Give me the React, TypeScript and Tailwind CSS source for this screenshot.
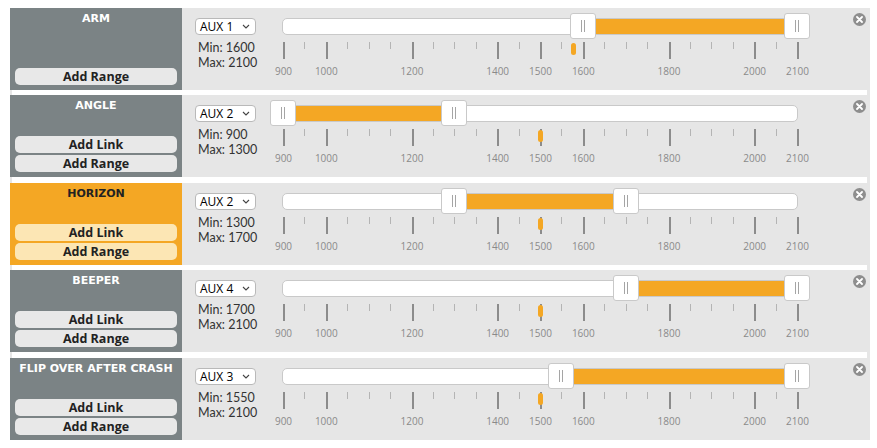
import React from "react";

const ORANGE = "#f4a724";
const W = 514;
const pos = (v: number) => 13 + ((v - 900) * W) / 1200;

const majors = [900, 1000, 1200, 1400, 1500, 1600, 1800, 2000, 2100];
const minors: number[] = [];
for (let v = 950; v <= 2050; v += 50) if (!majors.includes(v)) minors.push(v);

type Mode = {
  name: string;
  aux: string;
  lo: number;
  hi: number;
  marker: number;
  buttons: string[];
  active?: boolean;
};

const modes: Mode[] = [
  { name: "ARM", aux: "AUX 1", lo: 1600, hi: 2100, marker: 1576, buttons: ["Add Range"] },
  { name: "ANGLE", aux: "AUX 2", lo: 900, hi: 1300, marker: 1500, buttons: ["Add Link", "Add Range"] },
  { name: "HORIZON", aux: "AUX 2", lo: 1300, hi: 1700, marker: 1500, buttons: ["Add Link", "Add Range"], active: true },
  { name: "BEEPER", aux: "AUX 4", lo: 1700, hi: 2100, marker: 1500, buttons: ["Add Link", "Add Range"] },
  { name: "FLIP OVER AFTER CRASH", aux: "AUX 3", lo: 1550, hi: 2100, marker: 1500, buttons: ["Add Link", "Add Range"] },
];

function Handle({ v }: { v: number }) {
  return (
    <div
      className="absolute top-[5px] w-[26px] h-[26px] bg-white border border-[#c9c9c9] rounded-[3px] flex items-center justify-center gap-[2px]"
      style={{ left: Math.round(pos(v) - 13) }}
    >
      <div className="w-[1px] h-[12px] bg-[#a5a5a5]" />
      <div className="w-[1px] h-[12px] bg-[#a5a5a5]" />
    </div>
  );
}

function Slider({ m }: { m: Mode }) {
  return (
    <div className="relative w-[540px] h-full shrink-0">
      <div className="absolute left-[12px] top-[10px] w-[516px] h-[17px] bg-white border border-[#c9c9c9] rounded-[5px]" />
      <div
        className="absolute top-[11px] h-[15px]"
        style={{ left: pos(m.lo), width: pos(m.hi) - pos(m.lo), background: ORANGE }}
      />
      {minors.map((v) => (
        <div
          key={"n" + v}
          className="absolute top-[34px] w-[1px] h-[7px] bg-[#b4b4b4]"
          style={{ left: Math.round(pos(v)) }}
        />
      ))}
      {majors.map((v) => (
        <div
          key={"j" + v}
          className="absolute top-[34px] w-[1.5px] h-[17px] bg-[#8c8c8c]"
          style={{ left: Math.round(pos(v)) }}
        />
      ))}
      {majors.map((v) => (
        <div
          key={"l" + v}
          className="absolute top-[56px] -translate-x-1/2 text-[10px] leading-[14px] text-[#8a8a8a]"
          style={{ left: pos(v) + 0.5 }}
        >
          {v}
        </div>
      ))}
      <div
        className="absolute top-[35px] w-[5px] h-[12px] rounded-full"
        style={{ left: pos(m.marker) - 2, background: ORANGE }}
      />
      <Handle v={m.lo} />
      <Handle v={m.hi} />
    </div>
  );
}

function Row({ m }: { m: Mode }) {
  return (
    <div className="flex h-[82px] bg-[#e6e6e6]">
      <div
        className={
          "w-[172px] shrink-0 flex flex-col " + (m.active ? "bg-[#f4a724]" : "bg-[#7b8385]")
        }
      >
        <div
          className={
            "pt-[4px] text-center text-[11px] font-bold leading-[14px] font-['DejaVu_Sans',sans-serif] " +
            (m.active ? "text-[#222]" : "text-white")
          }
        >
          {m.name}
        </div>
        <div className="mt-auto flex flex-col gap-[2px] px-[5px] pb-[5px]">
          {m.buttons.map((b) => (
            <div
              key={b}
              className={
                "h-[17px] rounded-[5px] text-center text-[12.5px] font-bold leading-[17px] text-[#222] " +
                (m.active ? "bg-[#fce6b4]" : "bg-[#e8e8e8]")
              }
            >
              {b}
            </div>
          ))}
        </div>
      </div>
      <div className="w-[88px] shrink-0 pl-[13px] pt-[10px]">
        <div className="w-[61px] h-[17px] bg-white border border-[#b9b9b9] rounded-[4px] flex items-center pl-[4px] text-[12px] leading-[15px] text-black">
          <span>{m.aux}</span>
          <svg className="ml-auto mr-[5px]" width="8" height="5" viewBox="0 0 8 5">
            <path d="M1 1 L4 4 L7 1" fill="none" stroke="#444" strokeWidth="1.1" />
          </svg>
        </div>
        <div className="mt-[5px] pl-[3px] text-[12.5px] leading-[15px] text-[#333] font-['Lato',sans-serif]">
          <div>Min: {m.lo}</div>
          <div>Max: {m.hi}</div>
        </div>
      </div>
      <Slider m={m} />
      <div className="flex-1">
        <div className="ml-[43px] mt-[5px] w-[13px] h-[13px] rounded-full bg-[#8e8e8e] flex items-center justify-center">
          <svg width="7" height="7" viewBox="0 0 7 7">
            <path d="M1 1 L6 6 M6 1 L1 6" stroke="white" strokeWidth="1.8" strokeLinecap="round" />
          </svg>
        </div>
      </div>
    </div>
  );
}

export default function App() {
  const gaps = ["h-[5px]", "h-[6px]", "h-[5px]", "h-[6px]"];
  return (
    <div className="w-[877px] h-[448px] bg-white overflow-hidden font-['Open_Sans',sans-serif]">
      <div className="mt-[8px] ml-[10px] w-[860px] bg-[#e6e6e6]">
        {modes.map((m, i) => (
          <React.Fragment key={m.name}>
            <Row m={m} />
            {i < modes.length - 1 && <div className={gaps[i] + " bg-white ml-[2px] mr-[3px]"} />}
          </React.Fragment>
        ))}
      </div>
    </div>
  );
}
